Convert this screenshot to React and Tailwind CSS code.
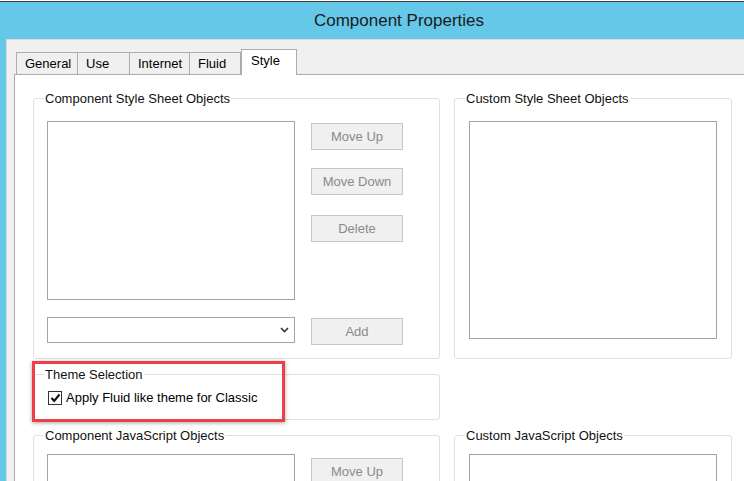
import React from 'react';

const tabs = [
  { label: 'General', w: 'w-[62px]' },
  { label: 'Use', w: 'w-[53px]' },
  { label: 'Internet', w: 'w-[61px]' },
  { label: 'Fluid', w: 'w-[52px]' },
];

const Btn = ({ children, className = '' }) => (
  <div
    className={`flex h-[27px] w-[92px] items-center justify-center border border-[#c6c6c6] bg-[#f0f0f0] text-[#8a8a8a] ${className}`}
  >
    {children}
  </div>
);

const Group = ({ title, className = '', inner = '', children }) => (
  <fieldset className={`min-w-0 rounded-[3px] border border-[#dde1e6] ${className}`}>
    <legend className="ml-[10px] px-[1px] leading-[15px] text-[#111]">{title}</legend>
    <div className={inner}>{children}</div>
  </fieldset>
);

const Listbox = ({ className = '' }) => (
  <div className={`w-[248px] shrink-0 border border-[#a3a3a3] bg-white ${className}`} />
);

export default function App() {
  return (
    <div className="relative flex h-[481px] w-[744px] flex-col overflow-hidden bg-[#65c8e9] font-['Liberation_Sans',Arial,sans-serif] text-[13px] text-black">
      <div className="h-[1px] shrink-0 bg-white" />
      <div className="h-[1px] shrink-0 bg-[#3a3a3a]" />
      <div className="flex h-[37px] shrink-0 items-center justify-center pl-[54px] text-[17px] text-[#1b1b1b]">
        Component Properties
      </div>

      <div className="flex min-h-0 flex-1 pl-[6px]">
        <div className="flex flex-1 flex-col overflow-hidden border-l border-t border-[#d8d8d8] bg-[#f0f0f0] pl-[7px] pt-[9px]">
          {/* tabs */}
          <div className="flex h-[25px] shrink-0 items-end pl-[2px]">
            {tabs.map((t, i) => (
              <div
                key={t.label}
                className={`h-[22px] ${t.w} ${i > 0 ? '-ml-px' : ''} border border-b-0 border-[#acacac] bg-[#f0f0f0] pl-[8px] pt-[3px] leading-[15px]`}
              >
                {t.label}
              </div>
            ))}
            <div className="relative z-10 -mb-px h-[26px] w-[56px] border border-b-0 border-[#acacac] bg-white pl-[9px] pt-[3px] leading-[15px]">
              Style
            </div>
          </div>

          {/* panel */}
          <div className="flex-1 border-l border-t border-[#acacac] bg-white pl-[18px] pt-[16px]">
            <div className="grid grid-cols-[407px_278px] gap-x-[14px]">
              <Group title="Component Style Sheet Objects" inner="pb-[13px] pl-[13px] pt-[15px]">
                <div className="flex">
                  <Listbox className="h-[179px]" />
                  <div className="ml-[16px] flex flex-col pt-[2px]">
                    <Btn>Move Up</Btn>
                    <Btn className="mt-[18px]">Move Down</Btn>
                    <Btn className="mt-[20px]">Delete</Btn>
                  </div>
                </div>
                <div className="mt-[17px] flex items-start">
                  <div className="flex h-[26px] w-[248px] items-center justify-end border border-[#a3a3a3] bg-white pr-[5px]">
                    <svg width="9" height="6" viewBox="0 0 9 6">
                      <path d="M1 1 L4.5 4.5 L8 1" fill="none" stroke="#333" strokeWidth="1.6" />
                    </svg>
                  </div>
                  <Btn className="ml-[16px] mt-px">Add</Btn>
                </div>
              </Group>

              <Group title="Custom Style Sheet Objects" inner="pb-[18px] pl-[14px] pt-[15px]">
                <Listbox className="h-[218px]" />
              </Group>

              <Group title="Theme Selection" className="mt-[8px]" inner="pb-[13px] pl-[13px] pt-[8px]">
                <div className="flex h-[16px] items-center">
                  <div className="ml-[1px] flex h-[14px] w-[14px] items-center justify-center border border-[#333] bg-white">
                    <svg width="11" height="10" viewBox="0 0 11 10">
                      <path d="M1.5 5 L4.2 8 L9.5 1.5" fill="none" stroke="#111" strokeWidth="2" />
                    </svg>
                  </div>
                  <span className="ml-[4px]">Apply Fluid like theme for Classic</span>
                </div>
              </Group>
              <div />

              <Group title="Component JavaScript Objects" className="mt-[8px]" inner="pl-[13px] pt-[11px]">
                <div className="flex">
                  <Listbox className="h-[60px]" />
                  <div className="ml-[16px] pt-[4px]">
                    <Btn>Move Up</Btn>
                  </div>
                </div>
              </Group>
              <Group title="Custom JavaScript Objects" className="mt-[8px]" inner="pl-[14px] pt-[11px]">
                <Listbox className="h-[60px]" />
              </Group>
            </div>
          </div>
        </div>
      </div>

      {/* annotation */}
      <div className="absolute left-[32px] top-[361px] h-[61px] w-[253px] border-[3px] border-[#ef3e46] shadow-[0_1px_4px_rgba(0,0,0,0.35)]" />
    </div>
  );
}
